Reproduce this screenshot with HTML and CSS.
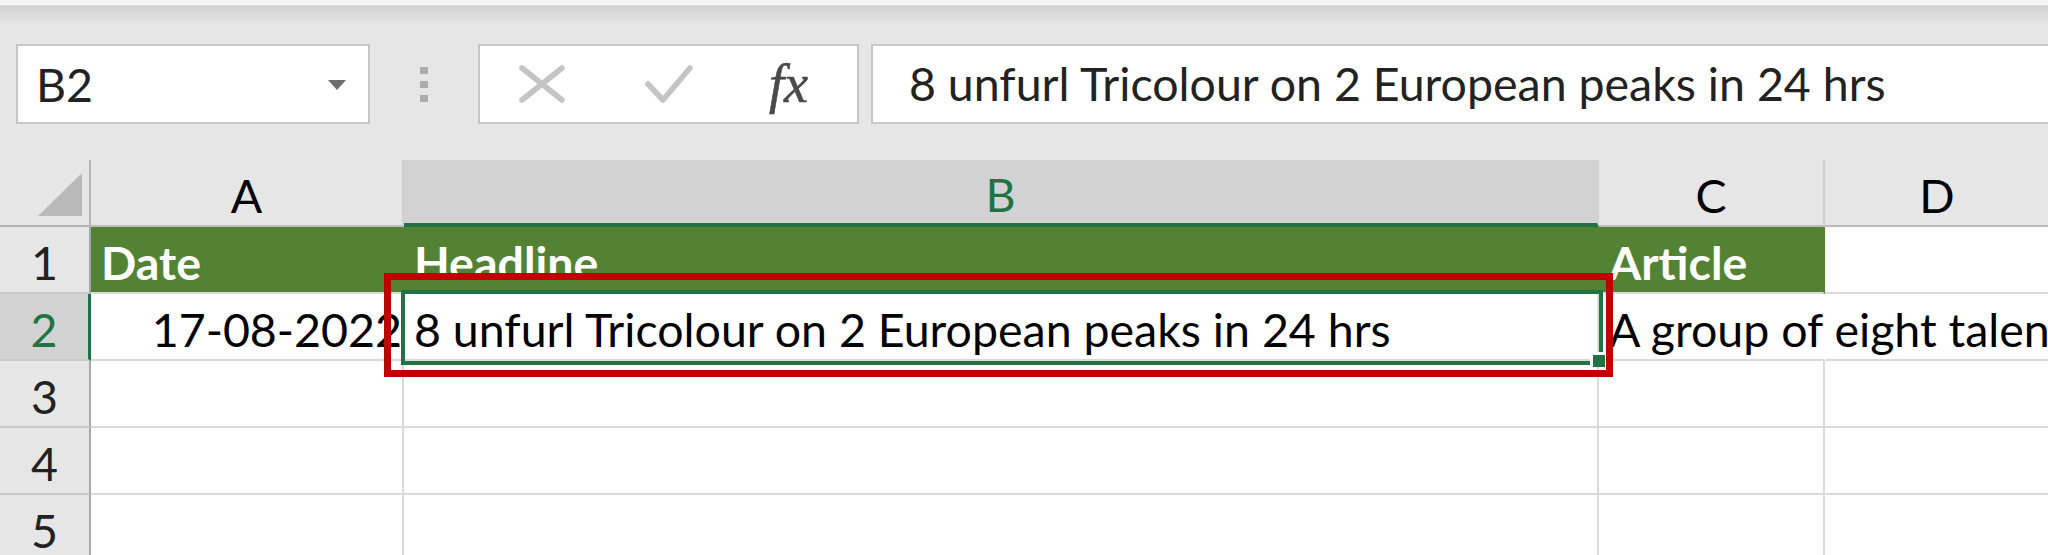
FILE: index.html
```html
<!DOCTYPE html>
<html lang="en">
<head>
    <meta charset="UTF-8">
    <title>Book1 - Excel</title>
    <link rel="stylesheet" href="styles.css">
</head>
<body>
    <div class="toolbar">
        <div class="namebox">
            <span>B2</span>
            <span class="caret"></span>
        </div>
        <div class="grip"><i></i><i></i><i></i></div>
        <div class="fnbox">
            <svg class="icon-cancel" width="48" height="40" viewBox="0 0 48 40">
                <path d="M4 4 L44 36 M44 4 L4 36" />
            </svg>
            <svg class="icon-enter" width="52" height="42" viewBox="0 0 52 42">
                <path d="M5 21 L20 37 L47 5" />
            </svg>
            <span class="fx">fx</span>
        </div>
        <div class="formula">8 unfurl Tricolour on 2 European peaks in 24 hrs</div>
    </div>

    <div class="sheet">
        <div class="corner">
            <svg width="91" height="67" viewBox="0 0 91 67"><polygon points="38,56 82,13 82,56" /></svg>
        </div>
        <div class="colhead">A</div>
        <div class="colhead active">B</div>
        <div class="colhead">C</div>
        <div class="colhead">D</div>

        <div class="rowhead">1</div>
        <div class="cell title">Date</div>
        <div class="cell title">Headline</div>
        <div class="cell title">Article</div>
        <div class="cell"></div>

        <div class="rowhead active">2</div>
        <div class="cell num">17-08-2022</div>
        <div class="cell selected">
            8 unfurl Tricolour on 2 European peaks in 24 hrs
            <div class="sel"></div>
            <div class="handle"></div>
            <div class="mark"></div>
        </div>
        <div class="cell spill">A group of eight talented mountaineers unfurled the Tricolour on two European peaks</div>
        <div class="cell"></div>

        <div class="rowhead">3</div>
        <div class="cell"></div>
        <div class="cell"></div>
        <div class="cell"></div>
        <div class="cell"></div>

        <div class="rowhead">4</div>
        <div class="cell"></div>
        <div class="cell"></div>
        <div class="cell"></div>
        <div class="cell"></div>

        <div class="rowhead">5</div>
        <div class="cell"></div>
        <div class="cell"></div>
        <div class="cell"></div>
        <div class="cell"></div>
    </div>
</body>
</html>
```

FILE: styles.css
```css
:root {
    --chrome: #e6e6e6;
    --chrome-active: #d2d2d2;
    --box-border: #c6c6c6;
    --grid: #dadada;
    --excel-green: #217346;
    --fill-green: #548235;
    --mark-red: #c00000;
}
body {
    margin: 0;
    width: 2048px;
    height: 555px;
    overflow: hidden;
    background-color: white;
    font-family: Lato, "Liberation Sans", sans-serif;
    font-size: 46.5px;
    color: #000;
}
.toolbar {
    display: flex;
    align-items: flex-start;
    height: 160px;
    box-sizing: border-box;
    padding: 44px 0 0 16px;
    background: linear-gradient(to bottom, #f4f4f4 0, #f4f4f4 5px, #d2d2d2 6px, var(--chrome) 26px);
}
.namebox, .fnbox, .formula {
    height: 80px;
    box-sizing: border-box;
    background-color: white;
    border: 2px solid var(--box-border);
}
.namebox {
    width: 354px;
    display: flex;
    align-items: center;
    justify-content: space-between;
    padding: 0 22px 0 18px;
    line-height: 74px;
    color: #222;
}
.caret {
    width: 0;
    height: 0;
    border-left: 9px solid transparent;
    border-right: 9px solid transparent;
    border-top: 10px solid #6e6e6e;
    margin-top: 2px;
}
.grip {
    width: 108px;
    height: 80px;
    display: flex;
    flex-direction: column;
    align-items: center;
    justify-content: center;
    gap: 7px;
}
.grip i {
    display: block;
    width: 8px;
    height: 7px;
    background-color: #adadad;
}
.fnbox {
    width: 381px;
    display: flex;
    align-items: center;
    padding-left: 38px;
}
.fnbox svg path {
    fill: none;
    stroke: #c4c4c4;
    stroke-width: 5.5;
    stroke-linecap: round;
    stroke-linejoin: round;
}
.icon-enter {
    margin-left: 77px;
}
.fx {
    margin-left: 74px;
    font-family: "Liberation Serif", serif;
    font-style: italic;
    font-size: 54px;
    line-height: 74px;
    color: #4a4a4a;
    -webkit-text-stroke: 0.6px #4a4a4a;
}
.formula {
    flex: 1;
    margin-left: 12px;
    margin-right: -10px;
    padding-left: 36px;
    line-height: 74px;
    white-space: nowrap;
    color: #222;
}
.sheet {
    display: grid;
    grid-template-columns: 91px 313px 1195px 226px 226px;
    grid-auto-rows: 67px;
    width: 2051px;
}
.corner, .colhead, .rowhead, .cell {
    box-sizing: border-box;
    border-right: 2px solid var(--grid);
    border-bottom: 2px solid var(--grid);
    line-height: 60px;
    padding-top: 5px;
    white-space: nowrap;
}
.corner {
    background-color: var(--chrome);
    border-right-color: #b4b4b4;
    border-bottom-color: #b4b4b4;
    padding: 0;
}
.corner svg {
    display: block;
}
.corner polygon {
    fill: #b9b9b9;
}
.colhead {
    background-color: var(--chrome);
    text-align: center;
    border-right-color: #d0d0d0;
    border-bottom-color: #bcbcbc;
}
.colhead.active {
    background-color: var(--chrome-active);
    border-bottom: 4px solid var(--excel-green);
    color: var(--excel-green);
    line-height: 58px;
}
.rowhead {
    background-color: var(--chrome);
    text-align: center;
    border-right-color: #a8a8a8;
    border-bottom-color: #c8c8c8;
    color: #222;
}
.rowhead.active {
    background-color: var(--chrome-active);
    border-right: 3px solid var(--excel-green);
    color: var(--excel-green);
}
.cell {
    padding-left: 10px;
    padding-right: 4px;
}
.cell.title {
    background-color: var(--fill-green);
    border-right-color: var(--fill-green);
    color: white;
    font-weight: bold;
}
.cell.num {
    text-align: right;
    padding-right: 0;
    overflow: hidden;
}
.cell.spill {
    border-right-color: transparent;
}
.cell.selected {
    position: relative;
}
.sel {
    position: absolute;
    left: -3px;
    top: -4px;
    right: -6px;
    bottom: -6px;
    border: 4px solid var(--excel-green);
}
.handle {
    position: absolute;
    right: -8px;
    bottom: -8px;
    width: 12px;
    height: 12px;
    background-color: var(--excel-green);
    border-left: 3px solid white;
    border-top: 3px solid white;
}
.mark {
    position: absolute;
    left: -20px;
    top: -21px;
    right: -16px;
    bottom: -18px;
    border: 7px solid var(--mark-red);
}
```
